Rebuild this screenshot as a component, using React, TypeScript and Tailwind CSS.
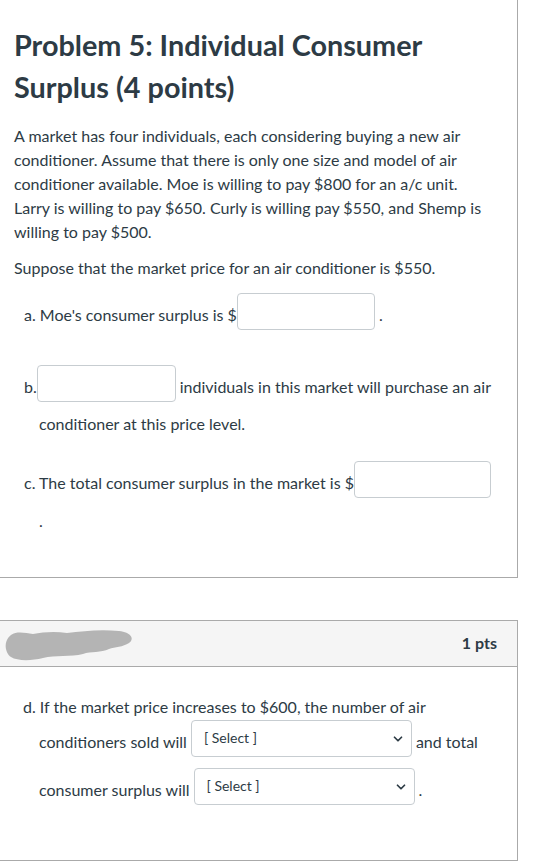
import { ChevronDown } from 'lucide-react'

const textBox = 'h-[37px] rounded-[4px] border border-[#c7cdd1] bg-white'

function Blank({ width }: { width: string }) {
  return <span className={`${textBox} ${width} shrink-0 block`} />
}

function SelectBox({ width }: { width: string }) {
  return (
    <span className={`${textBox} ${width} shrink-0 flex items-center justify-between pl-[12px] pr-[6px]`}>
      <span className="text-[14px] text-[#2d3b45] mt-[-2px]">[ Select ]</span>
      <ChevronDown size={14} strokeWidth={3} className="text-[#2d3b45]" />
    </span>
  )
}

export default function App() {
  return (
    <div className="min-h-[865px] bg-white text-[#2d3b45] font-['Lato','Noto_Sans',sans-serif] text-[16px]">
      {/* Question 5 body */}
      <div className="w-[518px] h-[578px] border-r border-b border-[#aaaaaa] pl-[14px] pr-[10px] pt-[24px]">
        <h2 className="text-[28.8px] font-bold leading-[42px] pr-[10px]">Problem 5: Individual Consumer Surplus (4 points)</h2>
        <p className="mt-[16px] leading-[24px] pr-[10px]">
          A market has four individuals, each considering buying a new air conditioner. Assume that there is only one
          size and model of air conditioner available. Moe is willing to pay $800 for an a/c unit. Larry is willing to
          pay $650. Curly is willing pay $550, and Shemp is willing to pay $500.
        </p>
        <p className="mt-[12px] leading-[24px]">Suppose that the market price for an air conditioner is $550.</p>

        <div className="mt-[13px] pl-[10px] flex items-center whitespace-nowrap">
          <span className="mt-[7px]">a. Moe's consumer surplus is $</span>
          <Blank width="w-[138px]" />
          <span className="ml-[4px] mt-[7px]">.</span>
        </div>

        <div className="mt-[35px] pl-[10px] flex items-center whitespace-nowrap">
          <span className="mt-[6px]">b.</span>
          <Blank width="w-[139px]" />
          <span className="ml-[4px] mt-[6px]">individuals in this market will purchase an air</span>
        </div>
        <div className="pl-[25px] mt-[10px] leading-[24px]">conditioner at this price level.</div>

        <div className="mt-[25px] pl-[10px] flex items-center whitespace-nowrap">
          <span className="mt-[7px]">c. The total consumer surplus in the market is $</span>
          <Blank width="w-[137px]" />
        </div>
        <div className="pl-[25px] mt-[11px] leading-[24px]">.</div>
      </div>

      {/* Next question */}
      <div className="mt-[42px] w-[518px] h-[241px] border-r border-t border-b border-[#aaaaaa]">
        <div className="h-[46px] bg-[#f5f5f5] border-b border-[#aaaaaa] flex items-center justify-between pr-[20px]">
          <svg width="132" height="34" viewBox="0 0 132 34" className="ml-[3px]">
            <path
              d="M8 8 C14 4 22 6 30 7 C40 5 52 4 64 6 C80 4 98 2 116 4 C128 5 132 12 126 16 C120 20 112 20 106 22 C98 26 88 24 80 27 C68 30 52 28 40 31 C28 34 14 34 8 30 C2 26 0 14 8 8 Z"
              fill="#b4b4b4"
            />
          </svg>
          <span className="font-bold mb-[2px]">1 pts</span>
        </div>
        <div className="pl-[23px] pr-[10px]">
          <div className="mt-[28px] leading-[24px]">d. If the market price increases to $600, the number of air</div>
          <div className="mt-[1px] pl-[16px] flex items-center whitespace-nowrap">
            <span className="mt-[7px]">conditioners sold will</span>
            <span className="ml-[4px]"><SelectBox width="w-[221px]" /></span>
            <span className="ml-[4px] mt-[7px]">and total</span>
          </div>
          <div className="mt-[11px] pl-[16px] flex items-center whitespace-nowrap">
            <span className="mt-[7px]">consumer surplus will</span>
            <span className="ml-[4px]"><SelectBox width="w-[221px]" /></span>
            <span className="ml-[4px] mt-[7px]">.</span>
          </div>
        </div>
      </div>
    </div>
  )
}
